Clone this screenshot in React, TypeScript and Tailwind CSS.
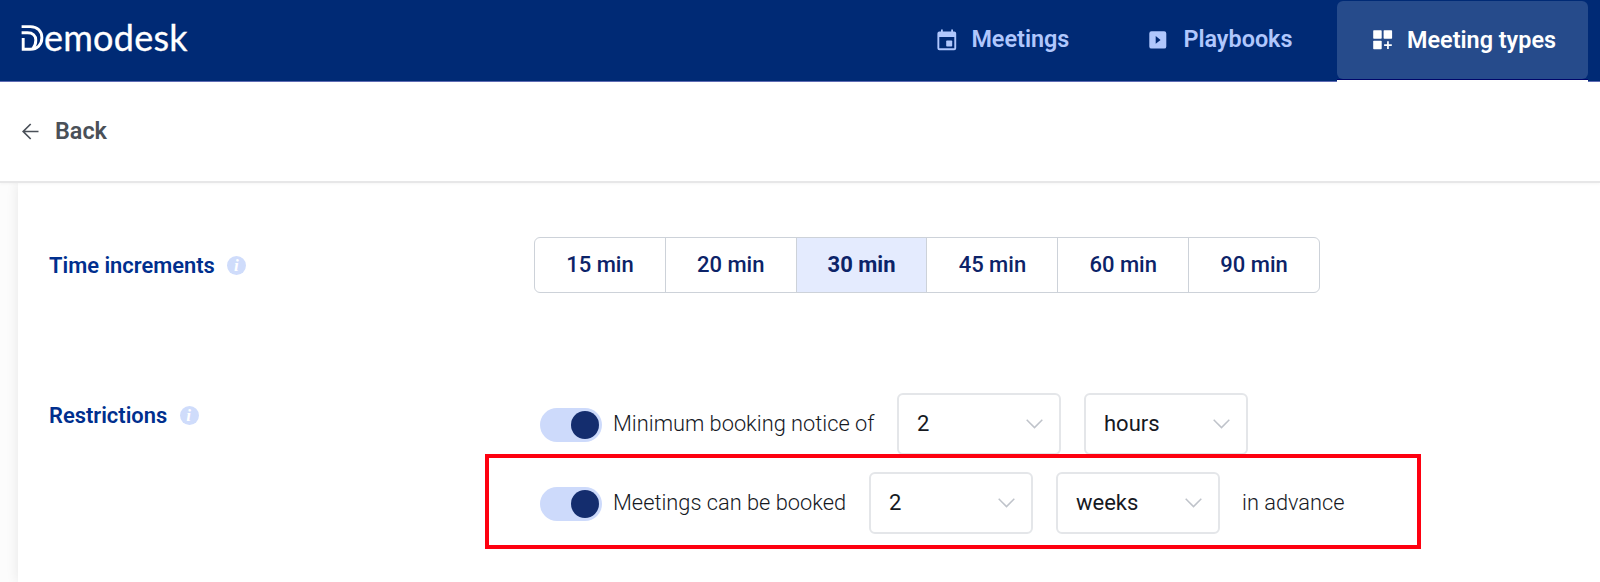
import clsx from "clsx";

const increments = ["15 min", "20 min", "30 min", "45 min", "60 min", "90 min"];

function Logo() {
  return (
    <div className="flex items-center text-white">
      <svg width="24" height="28" viewBox="0 0 24 28" fill="none" stroke="currentColor" strokeWidth="2.9">
        <path d="M0.6 3.6H9.5C16.5 3.6 20.9 8.2 20.9 14.8C20.9 21.8 16 26.3 9.5 26.3H2.2V15" />
        <path d="M0.6 9.8H6.5C11.8 9.8 14.8 13 14.8 17C14.8 20.5 14 23 12 25.500" />
      </svg>
      <span className="-ml-px font-['Lato',sans-serif] text-[36px] leading-[40px] tracking-[0.25px] [-webkit-text-stroke:0.3px_#fff]">
        emodesk
      </span>
    </div>
  );
}

function CalendarIcon() {
  return (
    <svg width="20" height="22" viewBox="0 0 20 22" fill="none">
      <path
        fillRule="evenodd"
        fill="currentColor"
        d="M4 0.5h1.8v2h8.4v-2H16v2h1.2a2 2 0 0 1 2 2v14.7a2 2 0 0 1-2 2H2.4a2 2 0 0 1-2-2V4.5a2 2 0 0 1 2-2H4zM2.3 8v11.3h15V8z"
      />
      <rect x="9.2" y="11.5" width="6" height="6" rx="0.8" fill="currentColor" />
    </svg>
  );
}

function PlaybookIcon() {
  return (
    <svg width="18" height="18" viewBox="0 0 18 18">
      <path
        fillRule="evenodd"
        fill="currentColor"
        d="M2.5 0.2h12.6a2.2 2.2 0 0 1 2.2 2.2v13a2.2 2.2 0 0 1-2.2 2.2H2.5A2.2 2.2 0 0 1 0.3 15.4V2.4A2.2 2.2 0 0 1 2.5 0.2zM6.7 5v7.8l4.9-3.9z"
      />
    </svg>
  );
}

function TypesIcon() {
  return (
    <svg width="20" height="20" viewBox="0 0 20 20" fill="currentColor">
      <rect x="0.2" y="0.2" width="8.5" height="8.5" rx="0.7" />
      <rect x="10.6" y="0.2" width="8.5" height="8.5" rx="0.7" />
      <rect x="0.2" y="10.7" width="8.5" height="8.5" rx="0.7" />
      <path d="M14.1 11.2h1.7v3h3v1.7h-3v3h-1.7v-3h-3v-1.7h3z" />
    </svg>
  );
}

function InfoIcon() {
  return (
    <span className="flex h-[19px] w-[19px] items-center justify-center rounded-full bg-[#cfdcfb] pr-px font-['Liberation_Serif',serif] text-[17px] leading-none font-bold text-white italic">
      i
    </span>
  );
}

function Toggle() {
  return (
    <div className="mt-0.5 flex h-[34px] w-[62px] shrink-0 items-center justify-end rounded-full bg-[#cddafb] pr-[3px]">
      <div className="h-7 w-7 rounded-full bg-[#142d6e]" />
    </div>
  );
}

function Select({ value }: { value: string }) {
  return (
    <div className="flex h-[62px] w-[164px] items-center justify-between rounded-md border-2 border-[#e4e6e9] bg-white pr-[16.5px] pl-[18px] text-[22px] text-[#16191f]">
      <span className="pb-0.5">{value}</span>
      <svg width="17" height="10" viewBox="0 0 17 10" fill="none" stroke="#bfc3ca" strokeWidth="1.5">
        <path d="M0.7 0.8L8.5 8.6L16.3 0.8" />
      </svg>
    </div>
  );
}

export default function App() {
  return (
    <div className="flex h-[582px] w-[1600px] flex-col overflow-hidden bg-white font-['Roboto',sans-serif]">
      <header className="flex h-[82px] shrink-0 items-start justify-between bg-[#002a75] pr-3 shadow-[inset_0_-1px_0_#5f6cb4]">
        <div className="pt-[17px] pl-[21px]">
          <Logo />
        </div>
        <nav className="flex text-[23.4px] font-semibold">
          <a className="flex h-[79px] items-center pr-[80px] text-[#b0c7fd]">
            <CalendarIcon />
            <span className="pt-px pl-[14.5px]">Meetings</span>
          </a>
          <a className="flex h-[79px] items-center pr-[44.5px] text-[#b0c7fd]">
            <PlaybookIcon />
            <span className="pt-px pl-4">Playbooks</span>
          </a>
          <a className="flex h-[82px] w-[251px] flex-col border-b-2 border-white pt-px text-white">
            <span className="flex h-[78px] items-center rounded-md bg-[#264b8b] pl-9">
              <TypesIcon />
              <span className="pt-px pl-[14px]">Meeting types</span>
            </span>
            <span className="h-px bg-[#00066a]" />
          </a>
        </nav>
      </header>

      <div className="z-10 flex h-[101px] shrink-0 items-center border-b-2 border-[#e7e7e8] bg-white pl-[22px] text-[#4a5058] shadow-[0_1px_3px_rgba(0,0,0,0.04)]">
        <svg width="17" height="17" viewBox="0 0 17 17" fill="none" stroke="currentColor" strokeWidth="1.7">
          <path d="M16.5 8.5H1.5M8.7 1L1.2 8.5L8.7 16" />
        </svg>
        <span className="pl-4 text-[23.4px] font-semibold">Back</span>
      </div>

      <main className="flex grow bg-[#fcfcfc] pl-[18px]">
        <div className="grow bg-white pl-[31px] shadow-[0_0_12px_rgba(0,0,0,0.09)]">
          {/* Time increments */}
          <section className="flex pt-[54px]">
            <div className="flex h-[57px] w-[485px] items-center gap-[12.5px] text-[21.9px] font-semibold text-[#002f8e]">
              <span className="pt-0.5">Time increments</span>
              <InfoIcon />
            </div>
            <div className="flex h-[56px] w-[786px] overflow-hidden rounded-md border border-[#cdd2d9]">
              {increments.map((label) => (
                <div
                  key={label}
                  className={clsx(
                    "flex flex-1 items-center justify-center border-r border-[#cdd2d9] pb-0.5 text-[22px] text-[#0c2368] last:border-r-0",
                    label === "30 min" ? "bg-[#e4ebfe] font-bold" : "font-medium"
                  )}
                >
                  {label}
                </div>
              ))}
            </div>
          </section>

          {/* Restrictions */}
          <section className="flex pt-[99px]">
            <div className="flex h-[45px] w-[491px] items-center gap-[12.5px] text-[21.9px] font-semibold text-[#002f8e]">
              <span className="pt-0.5">Restrictions</span>
              <InfoIcon />
            </div>
            <div className="flex flex-col gap-[17px] text-[21.8px] font-light text-[#16191f]">
              <div className="flex h-[62px] items-center">
                <Toggle />
                <span className="w-[295px] pl-[11px]">Minimum booking notice of</span>
                <div className="flex gap-[23px] font-normal">
                  <Select value="2" />
                  <Select value="hours" />
                </div>
              </div>
              <div className="relative flex h-[62px] items-center">
                <Toggle />
                <span className="w-[267px] pl-[11px]">Meetings can be booked</span>
                <div className="flex gap-[23px] font-normal">
                  <Select value="2" />
                  <Select value="weeks" />
                </div>
                <span className="pl-[22px]">in advance</span>
                <div className="absolute -top-[18px] -left-[55px] h-[95px] w-[936px] border-4 border-[#fe0010]" />
              </div>
            </div>
          </section>
        </div>
      </main>
    </div>
  );
}
